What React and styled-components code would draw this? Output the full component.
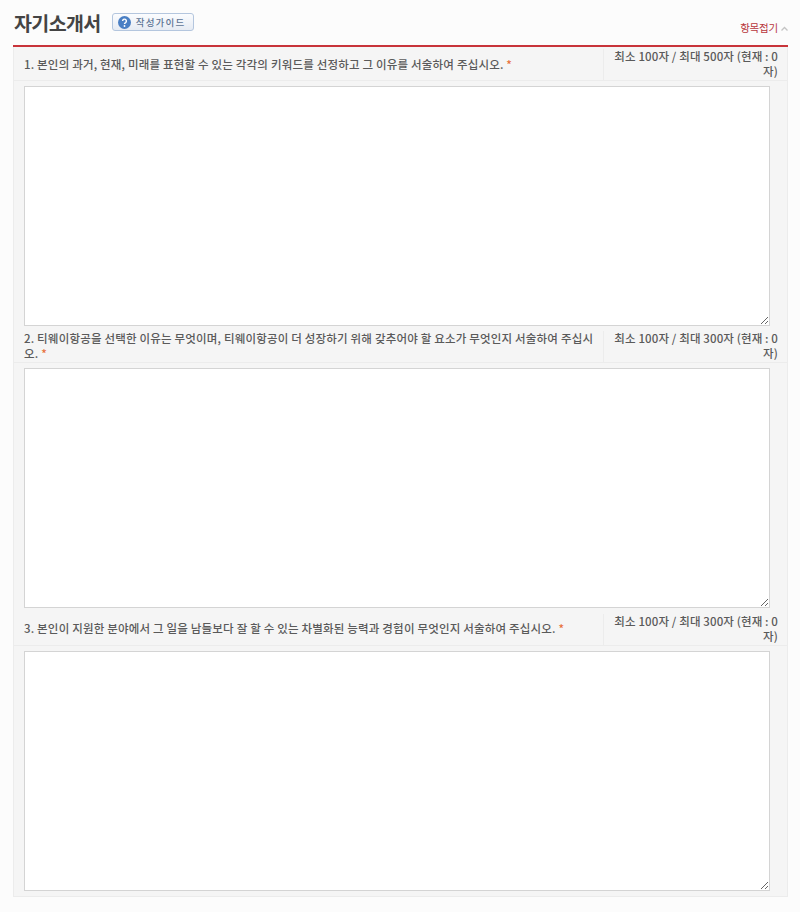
import React from 'react';
import styled, { createGlobalStyle } from 'styled-components';

const GlobalStyle = createGlobalStyle`
  html, body {
    margin: 0;
    padding: 0;
    background: #fcfcfc;
    font-family: "Noto Sans CJK KR", "Noto Sans", sans-serif;
  }
`;

const Page = styled.div`
  width: 800px;
  height: 912px;
  padding: 0 12px 0 13px;
  box-sizing: border-box;
`;

const TitleBar = styled.div`
  display: flex;
  align-items: flex-start;
  height: 45px;
  border-bottom: 2px solid #c8343a;
`;

const Title = styled.h2`
  margin: 9px 0 0 1px;
  font-size: 19.5px;
  line-height: 27px;
  font-weight: 700;
  letter-spacing: -0.6px;
  color: #444;
`;

const GuideButton = styled.button`
  display: flex;
  align-items: center;
  gap: 5px;
  width: 82px;
  height: 18px;
  margin: 13px 0 0 11px;
  padding: 0 0 0 5px;
  box-sizing: border-box;
  border: 1px solid #b4c6de;
  border-radius: 3px;
  background: linear-gradient(#fbfcfe, #e6ebf3);
  font-family: inherit;
  font-size: 9.5px;
  font-weight: 500;
  letter-spacing: 1.2px;
  color: #5c7394;
`;

const Fold = styled.a`
  display: flex;
  align-items: center;
  gap: 3px;
  margin: 20px 0 0 auto;
  font-size: 10.5px;
  line-height: 16px;
  letter-spacing: -0.2px;
  color: #b8373c;
`;

const Panel = styled.div`
  border: 1px solid #ececec;
  border-top: 0;
  background: #f5f5f5;
  padding-bottom: 5px;
`;

const Question = styled.div`
  &:not(:first-child) {
    margin-top: 5.25px;
  }
`;

const QuestionHead = styled.div`
  display: flex;
  box-sizing: border-box;
  height: ${({ $first }) => ($first ? '34px' : '32px')};
  padding-top: ${({ $first }) => ($first ? '2px' : '0')};
  border-bottom: 1px solid #ececec;
`;

const Label = styled.div`
  width: 590px;
  box-sizing: border-box;
  padding: 0 6px 0 10px;
  border-right: 1px solid #ececec;
  display: flex;
  align-items: center;
  font-size: 11.5px;
  line-height: 15px;
  font-weight: 500;
  letter-spacing: 0.18px;
  color: #5a5a5a;
`;

const LabelText = styled.span`
  display: block;
  margin-top: -1px;
`;

const Required = styled.span`
  color: #e8703a;
`;

const Limit = styled.div`
  flex: 1;
  box-sizing: border-box;
  padding: 0 9px 0 6px;
  font-size: 11.5px;
  line-height: 15px;
  font-weight: 500;
  letter-spacing: 0.12px;
  text-align: right;
  color: #5a5a5a;
`;

const Body = styled.div`
  padding: 5px 17px 0 10px;
  display: flex;
`;

const Answer = styled.textarea`
  display: block;
  width: 746px;
  height: 240px;
  box-sizing: border-box;
  margin: 0;
  padding: 4px;
  border: 1px solid #d4d4d4;
  border-radius: 0;
  background: #fff;
  outline: none;
  resize: vertical;
`;

const questions = [
  {
    id: 1,
    text: '1. 본인의 과거, 현재, 미래를 표현할 수 있는 각각의 키워드를 선정하고 그 이유를 서술하여 주십시오.',
    max: 500,
  },
  {
    id: 2,
    text: '2. 티웨이항공을 선택한 이유는 무엇이며, 티웨이항공이 더 성장하기 위해 갖추어야 할 요소가 무엇인지 서술하여 주십시오.',
    max: 300,
  },
  {
    id: 3,
    text: '3. 본인이 지원한 분야에서 그 일을 남들보다 잘 할 수 있는 차별화된 능력과 경험이 무엇인지 서술하여 주십시오.',
    max: 300,
  },
];

function HelpIcon() {
  return (
    <svg width="13" height="13" viewBox="0 0 13 13">
      <circle cx="6.5" cy="6.5" r="6.5" fill="#4a7fc4" />
      <path d="M4.6 5.1a1.9 1.9 0 1 1 2.9 1.6c-.7.4-1 .7-1 1.4" fill="none" stroke="#fff" strokeWidth="1.4" />
      <circle cx="6.5" cy="10" r=".9" fill="#fff" />
    </svg>
  );
}

function ChevronUp() {
  return (
    <svg width="7" height="5" viewBox="0 0 7 5">
      <path d="M.5 4.5l3-3 3 3" fill="none" stroke="#c4c4c4" strokeWidth="1.3" />
    </svg>
  );
}

export default function App() {
  return (
    <Page>
      <GlobalStyle />
      <TitleBar>
        <Title>자기소개서</Title>
        <GuideButton type="button">
          <HelpIcon />
          작성가이드
        </GuideButton>
        <Fold>
          항목접기
          <ChevronUp />
        </Fold>
      </TitleBar>
      <Panel>
        {questions.map((q, i) => (
          <Question key={q.id}>
            <QuestionHead $first={i === 0}>
              <Label>
                <LabelText>
                  {q.text} <Required>*</Required>
                </LabelText>
              </Label>
              <Limit>최소 100자 / 최대 {q.max}자 (현재 : 0자)</Limit>
            </QuestionHead>
            <Body>
              <Answer />
            </Body>
          </Question>
        ))}
      </Panel>
    </Page>
  );
}
